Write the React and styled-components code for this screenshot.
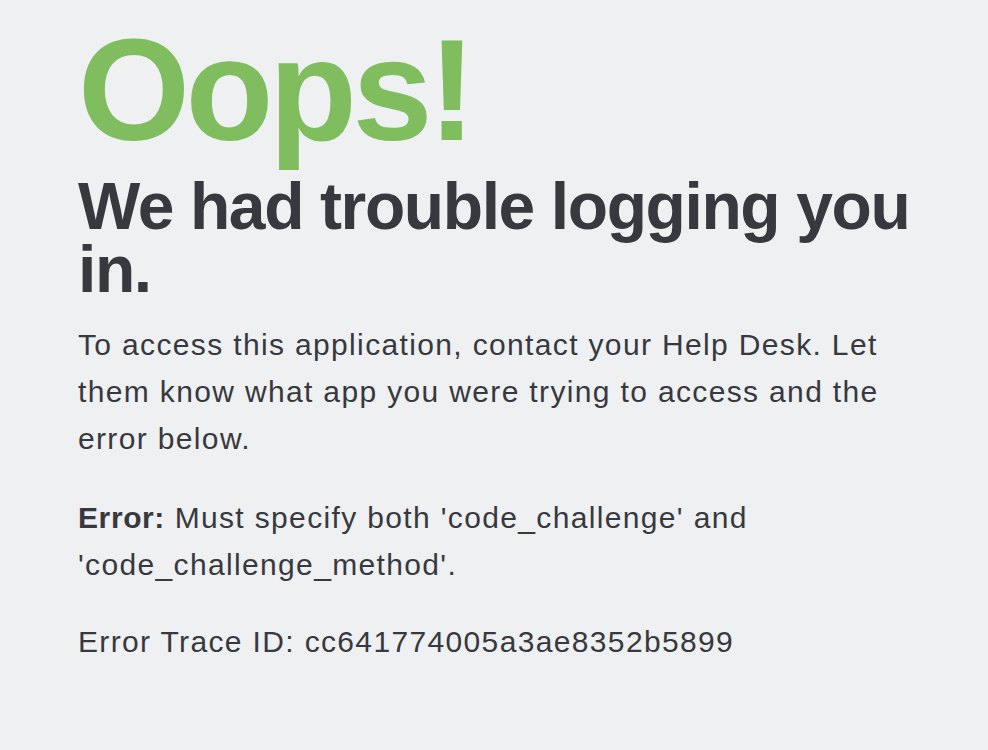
import React from 'react';
import styled, { createGlobalStyle } from 'styled-components';

const GlobalStyle = createGlobalStyle`
  html, body {
    margin: 0;
    padding: 0;
    background: #eff0f2;
  }
  body {
    font-family: "Liberation Sans", Arial, Helvetica, sans-serif;
    color: #37393e;
  }
`;

const Page = styled.main`
  min-height: 750px;
  box-sizing: border-box;
  padding: 19px 60px 40px 78px;
  max-width: 988px;
`;

const Oops = styled.h1`
  margin: 0;
  font-size: 144px;
  line-height: 144px;
  font-weight: 700;
  letter-spacing: -4.5px;
  color: #7fbd5f;
`;

const Title = styled.h2`
  margin: 12px 0 0;
  font-size: 66px;
  line-height: 63px;
  font-weight: 700;
  letter-spacing: -1.4px;
  color: #37393e;
`;

const Text = styled.p`
  margin: ${({ $gap }) => $gap || '20px'} 0 0;
  font-size: 30px;
  line-height: 47px;
  letter-spacing: 1.35px;
  color: #37393e;

  strong {
    font-weight: 700;
    letter-spacing: 0.6px;
  }
`;

const App = () => (
  <>
    <GlobalStyle />
    <Page>
      <Oops>Oops!</Oops>
      <Title>We had trouble logging you in.</Title>
      <Text>
        To access this application, contact your Help Desk. Let them know what
        app you were trying to access and the error below.
      </Text>
      <Text $gap="32px">
        <strong>Error:</strong> Must specify both 'code_challenge' and
        'code_challenge_method'.
      </Text>
      <Text $gap="30px">Error Trace ID: cc641774005a3ae8352b5899</Text>
    </Page>
  </>
);

export default App;
